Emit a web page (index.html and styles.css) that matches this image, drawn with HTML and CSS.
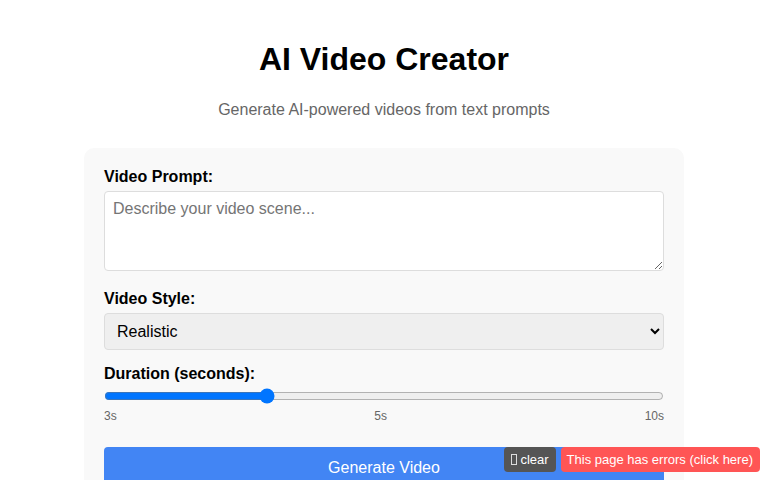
FILE: index.html
```html
<!DOCTYPE html>
<html lang="en">
<head>
<meta charset="utf-8">
<title>AI Video Creator</title>
<link rel="stylesheet" href="styles.css">
</head>
<body>
<div class="container">
  <h1>AI Video Creator</h1>
  <p class="subtitle">Generate AI-powered videos from text prompts</p>
  <div class="card">
    <div class="form-group">
      <label for="prompt">Video Prompt:</label>
      <textarea id="prompt" placeholder="Describe your video scene..."></textarea>
    </div>
    <div class="form-group">
      <label for="style">Video Style:</label>
      <select id="style">
        <option>Realistic</option>
        <option>Cartoon</option>
        <option>Cinematic</option>
      </select>
    </div>
    <div class="form-group">
      <label for="duration">Duration (seconds):</label>
      <input type="range" id="duration" min="3" max="10" value="5">
      <div class="range-labels"><span>3s</span><span>5s</span><span>10s</span></div>
    </div>
    <button class="generate">Generate Video</button>
  </div>
</div>
<div class="error-bar">
  <button class="clear-btn"><span class="tofu"></span> clear</button>
  <button class="error-btn">This page has errors (click here)</button>
</div>
</body>
</html>
```
FILE: styles.css
```css
html, body {
  margin: 0;
  background: #fff;
}
body {
  font-family: "Liberation Sans", Arial, sans-serif;
  color: #000;
  padding: 20px;
}
.container {
  max-width: 600px;
  margin: 0 auto;
}
h1 {
  text-align: center;
  font-size: 32px;
  margin: 21px 0 23px;
  color: #000;
}
.subtitle {
  text-align: center;
  color: #666;
  font-size: 16px;
  margin: 0 0 29px;
}
.card {
  background: #f9f9f9;
  border-radius: 10px;
  padding: 20px;
}
.form-group {
  margin-bottom: 15px;
}
.form-group label {
  display: block;
  font-weight: bold;
  font-size: 16px;
  margin-bottom: 5px;
}
textarea {
  width: 100%;
  height: 80px;
  box-sizing: border-box;
  padding: 8px;
  border: 1px solid #ddd;
  border-radius: 4px;
  font-family: "Liberation Sans", Arial, sans-serif;
  font-size: 16px;
  background: #fff;
  resize: vertical;
}
textarea::placeholder {
  color: #757575;
}
select {
  width: 100%;
  box-sizing: border-box;
  padding: 8px;
  border: 1px solid #ddd;
  border-radius: 4px;
  font-family: "Liberation Sans", Arial, sans-serif;
  font-size: 16px;
  background-color: #efefef;
  color: #000;
}
input[type="range"] {
  width: 100%;
  box-sizing: border-box;
  margin: 3px 0 5px;
  display: block;
}
.range-labels {
  display: flex;
  justify-content: space-between;
  font-size: 12px;
  color: #666;
}
.generate {
  display: block;
  width: 100%;
  margin-top: 24px;
  padding: 12px;
  border: none;
  border-radius: 4px;
  background: #4285f4;
  color: #fff;
  font-family: "Liberation Sans", Arial, sans-serif;
  font-size: 16px;
}
.error-bar {
  position: fixed;
  right: 8px;
  bottom: 8px;
  display: flex;
  gap: 5px;
}
.error-bar button {
  border: none;
  border-radius: 4px;
  color: #fff;
  font-family: "Liberation Sans", Arial, sans-serif;
  font-size: 13px;
  height: 25px;
  padding: 0 7px;
}
.clear-btn {
  background: #555;
  display: flex;
  align-items: center;
  gap: 3px;
}
.tofu {
  display: inline-block;
  width: 4px;
  height: 9px;
  border: 1px solid #ddd;
}
.error-btn {
  background: #ff5555;
  padding: 0 7px 0 6px !important;
}
```
